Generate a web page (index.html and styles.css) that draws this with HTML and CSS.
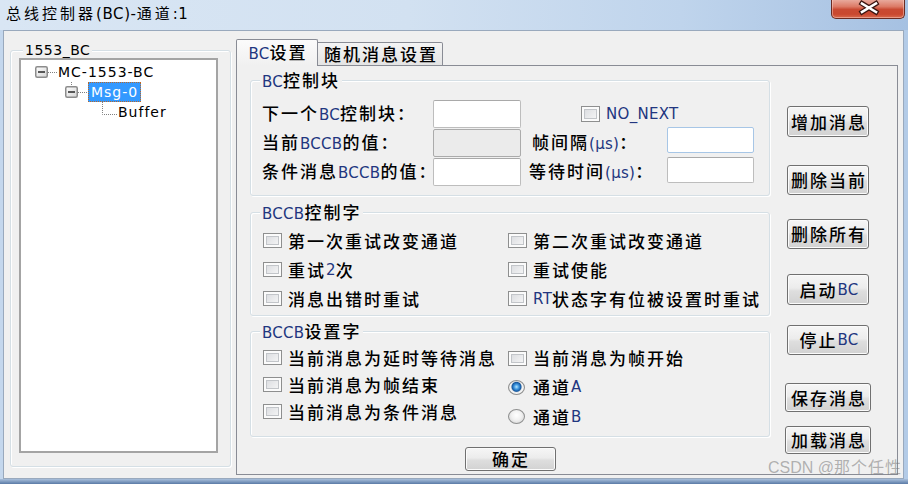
FILE: index.html
```html
<!DOCTYPE html>
<html lang="zh-CN">
<head>
<meta charset="utf-8">
<title>总线控制器(BC)-通道:1</title>
<link rel="stylesheet" href="styles.css">
</head>
<body>
<div class="win">
  <div class="titlebar">
    <div class="title">总线控制器<span class="tl">(BC)-</span>通道<span class="tl">:1</span></div>
    <div class="close">
      <svg width="72" height="19" viewBox="0 0 72 19">
        <path d="M30 4.5 L44 13 M44 4.5 L30 13" stroke="#3b1510" stroke-width="5" stroke-linecap="square" fill="none"/>
        <path d="M30 4.5 L44 13 M44 4.5 L30 13" stroke="#ffffff" stroke-width="2.6" stroke-linecap="square" fill="none"/>
      </svg>
    </div>
  </div>
  <div class="client">
    <div class="grp grp-tree">
      <div class="glabel">1553_BC</div>
      <div class="tree">
        <div class="trow r1">
          <svg width="23" height="20" viewBox="0 0 23 20">
            <defs>
              <linearGradient id="eg" x1="0" y1="0" x2="1" y2="1">
                <stop offset="0" stop-color="#ffffff"/>
                <stop offset="1" stop-color="#d4d4d4"/>
              </linearGradient>
            </defs>
            <rect x="0.75" y="4.75" width="11.5" height="10.5" rx="1.5" fill="url(#eg)" stroke="#8c8c8c" stroke-width="1.5"/>
            <path d="M3 10H10" stroke="#333333" stroke-width="1.6"/>
            <path d="M13 10.5H23" stroke="#808080" stroke-dasharray="1 1"/>
          </svg>
          <span class="ttext">MC-1553-BC</span>
        </div>
        <div class="trow r2">
          <svg width="23" height="20" viewBox="0 0 23 20">
            <path d="M6.5 0V4" stroke="#808080" stroke-dasharray="1 1"/>
            <rect x="0.75" y="4.75" width="11.5" height="10.5" rx="1.5" fill="url(#eg)" stroke="#8c8c8c" stroke-width="1.5"/>
            <path d="M3 10H10" stroke="#333333" stroke-width="1.6"/>
            <path d="M13 10.5H23" stroke="#808080" stroke-dasharray="1 1"/>
          </svg>
          <span class="ttext sel">Msg-0</span>
        </div>
        <div class="trow r3">
          <svg width="20" height="20" viewBox="0 0 20 20">
            <path d="M4.5 0V12.5H20" stroke="#808080" stroke-dasharray="1 1" fill="none"/>
          </svg>
          <span class="ttext">Buffer</span>
        </div>
      </div>
    </div>

    <div class="tabctl">
      <div class="tabs">
        <div class="tab sel"><span class="lat">BC</span>设置</div>
        <div class="tab un">随机消息设置</div>
      </div>
      <div class="panel">
        <div class="leftcol">
          <div class="grp g1">
            <div class="glabel"><span class="lat">BC</span>控制块</div>
            <div class="rows1">
              <div class="frow">
                <span class="lab">下一个<span class="lat">BC</span>控制块：</span>
                <input class="in" type="text">
                <span class="item nn"><span class="cb big"></span><span class="lat">NO_NEXT</span></span>
              </div>
              <div class="frow">
                <span class="lab">当前<span class="lat">BCCB</span>的值：</span>
                <input class="in dis" type="text" disabled>
                <span class="lab2">帧间隔<span class="lat">(μs)</span>：</span>
                <input class="in sm focus up6" type="text">
              </div>
              <div class="frow">
                <span class="lab">条件消息<span class="lat">BCCB</span>的值：</span>
                <input class="in" type="text">
                <span class="lab3">等待时间<span class="lat">(μs)</span>：</span>
                <input class="in sm up3" type="text">
              </div>
            </div>
          </div>

          <div class="grp g2">
            <div class="glabel"><span class="lat">BCCB</span>控制字</div>
            <div class="rows2">
              <div class="crow">
                <span class="item c1"><span class="cb"></span>第一次重试改变通道</span>
                <span class="item"><span class="cb"></span>第二次重试改变通道</span>
              </div>
              <div class="crow">
                <span class="item c1"><span class="cb"></span>重试<span class="lat">2</span>次</span>
                <span class="item"><span class="cb"></span>重试使能</span>
              </div>
              <div class="crow">
                <span class="item c1"><span class="cb"></span>消息出错时重试</span>
                <span class="item"><span class="cb"></span><span class="lat">RT</span>状态字有位被设置时重试</span>
              </div>
            </div>
          </div>

          <div class="grp g3">
            <div class="glabel"><span class="lat">BCCB</span>设置字</div>
            <div class="cols3">
              <div class="col a">
                <span class="item"><span class="cb"></span>当前消息为延时等待消息</span>
                <span class="item"><span class="cb"></span>当前消息为帧结束</span>
                <span class="item"><span class="cb"></span>当前消息为条件消息</span>
              </div>
              <div class="col b">
                <span class="item i1"><span class="cb"></span>当前消息为帧开始</span>
                <span class="item i2"><span class="rd on"></span>通道<span class="lat">A</span></span>
                <span class="item i3"><span class="rd"></span>通道<span class="lat">B</span></span>
              </div>
            </div>
          </div>

          <div class="okrow"><button class="btn ok" type="button">确定</button></div>
        </div>

        <div class="rightcol">
          <button class="btn rb b1" type="button">增加消息</button>
          <button class="btn rb b2" type="button">删除当前</button>
          <button class="btn rb b3" type="button">删除所有</button>
          <button class="btn rb b4" type="button">启动<span class="lat">BC</span></button>
          <button class="btn rb b5" type="button">停止<span class="lat">BC</span></button>
          <button class="btn rb b6" type="button">保存消息</button>
          <button class="btn rb b7" type="button">加载消息</button>
        </div>
      </div>
    </div>
  </div>
  <div class="bottomband"></div>
</div>
<div class="wm">CSDN @<span class="cj">那个任性</span></div>
</body>
</html>
```

FILE: styles.css
```css
* { box-sizing: border-box; }
html, body { margin: 0; padding: 0; }
body {
  width: 908px;
  height: 484px;
  overflow: hidden;
  position: relative;
  background: #bed3ea;
  font-family: "Noto Sans CJK SC", "Noto Sans CJK JP", sans-serif;
  font-size: 17px;
  font-weight: 500;
  letter-spacing: 2px;
  line-height: 20px;
  color: #000;
}
.win {
  display: flex;
  flex-direction: column;
  height: 484px;
  background: linear-gradient(to right, #c4d7ed, #b3cbe7);
}
.titlebar {
  flex: none;
  height: 30px;
  display: flex;
  align-items: flex-start;
  background: linear-gradient(to right, #d9e6f4 0%, #d2e1f1 45%, #bfd4ec 75%, #a6c1e2 100%);
}
.title {
  margin: 3px 0 0 6px;
  font-size: 15px;
  font-weight: 400;
  letter-spacing: 3px;
  line-height: 20px;
  white-space: nowrap;
}
.tl { font-family: "DejaVu Sans", sans-serif; letter-spacing: 0.6px; }
.close {
  margin: -1px 3px 0 auto;
  width: 74px;
  height: 20px;
  border: 1px solid #6a2b22;
  border-top: none;
  border-radius: 0 0 5px 5px;
  background: linear-gradient(#eab0a4 0%, #dc7a66 40%, #c94a33 55%, #c9482f 80%, #d96a4e 100%);
  box-shadow: inset 0 0 0 1px rgba(255, 220, 210, 0.45);
  display: flex;
}
.close svg { display: block; }

.client {
  flex: none;
  margin-left: 3px;
  width: 901px;
  height: 449px;
  border: 1px solid #99a9bd;
  background: #f0f0f0;
  display: flex;
  align-items: flex-start;
}
.bottomband {
  flex: 1;
  background: linear-gradient(#a9c0dc, #5a7aa6);
}

/* group boxes */
.grp {
  border: 1px solid #d5dfe5;
  border-radius: 3px;
  box-shadow: inset 1px 1px 0 #fff, 1px 1px 0 #fff;
}
.glabel {
  width: max-content;
  height: 20px;
  margin: -11px 0 0 9px;
  padding: 0 2px;
  background: #f0f0f0;
  line-height: 20px;
  white-space: nowrap;
}

/* tree */
.grp-tree {
  flex: none;
  margin: 19px 0 0 6px;
  width: 221px;
  height: 417px;
}
.grp-tree .glabel {
  margin-left: 12px;
  font-family: "DejaVu Sans", sans-serif;
  font-size: 14px;
  font-weight: 400;
  letter-spacing: 0.5px;
}
.tree {
  margin: -2px 0 0 8px;
  width: 199px;
  height: 395px;
  border: 2px solid #a4a4a4;
  background: #fff;
  padding-top: 2px;
  font-family: "DejaVu Sans", sans-serif;
  font-size: 14px;
  font-weight: 400;
  letter-spacing: 1px;
}
.trow { height: 20px; display: flex; align-items: center; }
.trow svg { display: block; flex: none; }
.r1 { padding-left: 14px; }
.r2 { padding-left: 44px; }
.r3 { padding-left: 77px; }
.ttext { line-height: 18px; white-space: nowrap; }
.ttext.sel {
  background: #3399ff;
  color: #fff;
  height: 20px;
  padding: 0 2px;
  border: 1px dotted #b8682a;
}

/* tabs */
.tabctl {
  flex: none;
  margin: 8px 0 0 5px;
  width: 662px;
}
.tabs {
  display: flex;
  align-items: flex-end;
  height: 27px;
  margin-bottom: -1px;
}
.tab { text-align: center; white-space: nowrap; padding-left: 2px; }
.tab.sel {
  position: relative;
  z-index: 1;
  width: 82px;
  height: 27px;
  border: 1px solid #898c95;
  border-bottom: none;
  border-radius: 2px 2px 0 0;
  background: linear-gradient(#fbfbfb, #f0f0f0);
  line-height: 24px;
}
.tab.un {
  width: 125px;
  height: 24px;
  border: 1px solid #898c95;
  border-left: none;
  border-radius: 0 2px 0 0;
  background: linear-gradient(#f4f4f4, #e4e4e4);
  line-height: 22px;
}
.panel {
  height: 410px;
  border: 1px solid #898c95;
  background: #f0f0f0;
  display: flex;
  align-items: flex-start;
}
.leftcol {
  flex: none;
  width: 521px;
  margin: 14px 0 0 13px;
  display: flex;
  flex-direction: column;
}
.g1 { width: 520px; height: 116px; }
.g2 { width: 520px; height: 104px; margin-top: 16px; }
.g3 { width: 520px; height: 106px; margin-top: 15px; }

.lat {
  font-family: "DejaVu Sans", sans-serif;
  font-size: 15px;
  font-weight: 400;
  letter-spacing: 0.3px;
  color: #22367f;
}

/* BC control block */
.rows1 { margin-top: 9px; padding-left: 11px; }
.frow { height: 29px; display: flex; align-items: center; }
.lab { flex: none; width: 171px; white-space: nowrap; }
.lab2 { flex: none; width: 135px; margin-left: 11px; white-space: nowrap; }
.lab3 { flex: none; width: 138px; margin-left: 8px; white-space: nowrap; }
.in {
  flex: none;
  width: 88px;
  height: 28px;
  margin: 0;
  padding: 0;
  border: 1px solid #bdbdbd;
  border-top-color: #a9a9a9;
  border-radius: 2px;
  background: #fff;
  font: inherit;
}
.in.dis { background: #ebebeb; border-color: #ababab; }
.in.sm { width: 87px; height: 26px; }
.in.focus { border-color: #a7c6e6; }
.in.up6 { margin-bottom: 6px; }
.in.up3 { margin-bottom: 3px; }
.nn { margin-left: 60px; }

/* check boxes / radios */
.item { display: flex; align-items: center; white-space: nowrap; }
.cb {
  flex: none;
  width: 19px;
  height: 15px;
  margin-right: 6px;
  border: 1px solid #8e8f8f;
  background: linear-gradient(135deg, #d6d8dc, #fafafa);
  box-shadow: inset 0 0 0 2px #fbfbfb, inset 0 0 0 3px #c2c5c9;
}
.cb.big { height: 16px; }
.rd {
  flex: none;
  width: 17px;
  height: 15px;
  margin-right: 8px;
  border-radius: 50%;
  border: 1px solid #8e8f8f;
  background: radial-gradient(circle at 50% 40%, #ffffff 0%, #f1f1f1 45%, #cdcdcd 100%);
}
.rd.on {
  background: radial-gradient(circle at 50% 45%, #b4e6ff 0px, #3c94de 2.5px, #14579e 4.5px, #e6e6e6 5.5px, #fafafa 6.5px, #d0d0d0 8px);
}

.rows2 { margin-top: 4px; padding-left: 12px; }
.crow { height: 29px; display: flex; align-items: center; }
.c1 { flex: none; width: 245px; }

.cols3 { margin-top: 3px; padding-left: 12px; display: flex; }
.col { display: flex; flex-direction: column; }
.col.a { flex: none; width: 245px; }
.col.a .item { height: 27px; }
.i1 { height: 28px; }
.i2 { height: 30px; }
.i3 { height: 29px; }

/* buttons */
.btn {
  font: inherit;
  letter-spacing: 2px;
  color: #000;
  margin: 0;
  padding: 0 0 0 2px;
  border: 1px solid #707070;
  border-radius: 3px;
  background: linear-gradient(#f6f6f6 0%, #ececec 45%, #dedede 55%, #d2d2d2 100%);
  box-shadow: inset 0 0 0 1px #fbfbfb;
  white-space: nowrap;
  display: flex;
  align-items: center;
  justify-content: center;
}
.okrow { margin-top: 10px; width: 520px; display: flex; justify-content: center; }
.ok { width: 91px; height: 24px; }

.rightcol {
  flex: none;
  margin: 40px 0 0 16px;
  display: flex;
  flex-direction: column;
  align-items: flex-start;
}
.rb { width: 82px; }
.b1 { height: 31px; }
.b2 { height: 30px; margin-top: 28px; }
.b3 { height: 30px; margin-top: 24px; }
.b4 { height: 31px; margin-top: 25px; }
.b5 { height: 30px; margin-top: 20px; }
.b6 { height: 29px; margin-top: 28px; width: 86px; margin-left: -2px; }
.b7 { height: 28px; margin-top: 14px; width: 86px; margin-left: -2px; }

/* watermark overlay */
.wm {
  position: absolute;
  left: 768px;
  top: 458px;
  font-family: "Liberation Sans", "Noto Sans CJK SC", sans-serif;
  font-size: 16px;
  font-weight: 400;
  line-height: 20px;
  letter-spacing: 0;
  color: rgba(120, 120, 120, 0.55);
  white-space: nowrap;
}
.wm .cj { letter-spacing: 1px; }
```
